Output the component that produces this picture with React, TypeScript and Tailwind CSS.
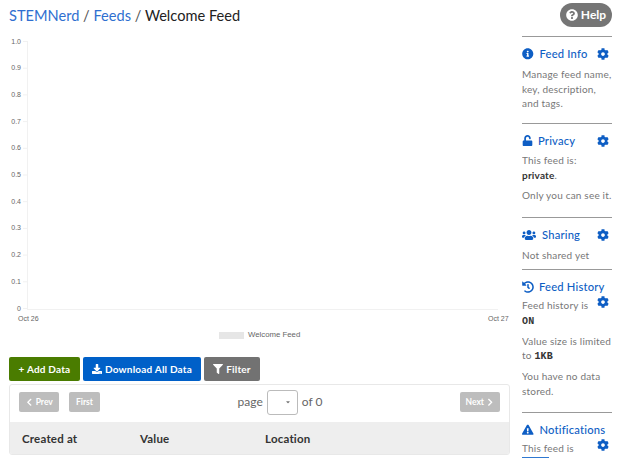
import { FaInfoCircle, FaUnlock, FaCog, FaUsers, FaHistory, FaExclamationTriangle, FaQuestionCircle, FaDownload, FaFilter, FaChevronLeft, FaChevronRight, FaCaretDown } from "react-icons/fa";
import type { ReactNode } from "react";

const ticks = ["1.0", "0.9", "0.8", "0.7", "0.6", "0.5", "0.4", "0.3", "0.2", "0.1", "0"];

function Chart() {
  const top = 41;
  const step = 26.7;
  return (
    <svg width="510" height="310" viewBox="0 30 510 310" className="block" style={{ fontFamily: "Liberation Sans, sans-serif" }}>
      <line x1="27.5" y1="41" x2="27.5" y2="309" stroke="#f1f1f1" />
      <line x1="27" y1="309.5" x2="498" y2="309.5" stroke="#f1f1f1" />
      {ticks.map((t, i) => (
        <g key={t}>
          <line x1="23" x2="27" y1={top + i * step + 0.5} y2={top + i * step + 0.5} stroke="#f1f1f1" />
          <text x="21" y={top + i * step + 2.5} textAnchor="end" fontSize="7" fill="#666">{t}</text>
        </g>
      ))}
      <text x="18" y="321" fontSize="7" fill="#666">Oct 26</text>
      <text x="488" y="321" fontSize="7" fill="#666">Oct 27</text>
      <rect x="219" y="332" width="25" height="7" fill="#e6e6e6" />
      <text x="248" y="337" fontSize="7.8" fill="#666">Welcome Feed</text>
    </svg>
  );
}

function Section({ icon, title, gear, gapClass = "gap-[6px]", children }: { icon: ReactNode; title: string; gear?: boolean; gapClass?: string; children: ReactNode }) {
  return (
    <section className="pt-[6px]">
      <div className="flex items-center justify-between h-[22px]">
        <div className={`flex items-center ${gapClass} text-[#0e5ec4] text-[11.2px] font-medium tracking-[0.2px]`}>
          {icon}
          <span className="whitespace-nowrap">{title}</span>
        </div>
        {gear && <FaCog className="text-[#0e5ec4] text-[12px] mr-[3px] shrink-0" />}
      </div>
      <div className="text-[10px] leading-[14.5px] text-[#777] tracking-[0.2px]">{children}</div>
    </section>
  );
}

function BodyGear() {
  return (
    <div className="relative">
      <FaCog className="absolute right-[3px] top-[-2px] text-[#0e5ec4] text-[12px]" />
    </div>
  );
}

function Pager({ children, className = "" }: { children: ReactNode; className?: string }) {
  return (
    <button className={`h-5 rounded-[2px] bg-[#bdbdbd] text-white text-[8.5px] font-bold flex items-center justify-center gap-[2px] ${className}`}>
      {children}
    </button>
  );
}

const mono = { fontFamily: "Liberation Mono, monospace" };

export default function App() {
  return (
    <div className="w-[624px] h-[459px] overflow-hidden bg-white flex text-[#222]" style={{ fontFamily: "Lato, sans-serif" }}>
      <main className="w-[510px] shrink-0">
        <h1 className="pl-[9px] pt-[6px] h-[30px] text-[14.6px] leading-[20px] text-[#222] whitespace-nowrap">
          <span className="text-[#2f6fd0]">STEMNerd</span> <span className="text-[#555]">/</span> <span className="text-[#2f6fd0]">Feeds</span> <span className="text-[#555]">/</span> Welcome Feed
        </h1>
        <Chart />
        <div className="flex gap-[3px] pl-[9px] mt-[17px]">
          <button className="h-6 w-[71px] rounded-[2px] bg-[#4a7c00] text-white text-[10px] font-bold tracking-[0.2px]">+ Add Data</button>
          <button className="h-6 w-[118px] rounded-[2px] bg-[#0060c8] text-white text-[10px] font-bold tracking-[0.2px] flex items-center justify-center gap-[3px]"><FaDownload className="text-[10px]" />Download All Data</button>
          <button className="h-6 w-[56px] rounded-[2px] bg-[#727272] text-white text-[10px] font-bold tracking-[0.2px] flex items-center justify-center gap-[3px]"><FaFilter className="text-[10px]" />Filter</button>
        </div>
        <div className="ml-[9px] mt-[3px] w-[501px] h-[71px] border border-[#e8e8e8] rounded-[3px] flex flex-col overflow-hidden">
          <div className="h-[37px] flex items-center justify-between px-[9px] pb-[3px]">
            <div className="flex gap-[10px]">
              <Pager className="w-10"><FaChevronLeft className="text-[8.5px]" />Prev</Pager>
              <Pager className="w-[31px]">First</Pager>
            </div>
            <div className="flex items-center gap-[4px] text-[12px] text-[#666]">
              <span>page</span>
              <div className="w-[31px] h-[25px] border border-[#bbb] rounded-[3px] flex items-center justify-end pr-[6px]"><FaCaretDown className="text-[6px] text-[#777]" /></div>
              <span>of 0</span>
            </div>
            <Pager className="w-10">Next<FaChevronRight className="text-[8.5px]" /></Pager>
          </div>
          <div className="flex-1 bg-[#eeeeee] flex items-center text-[11.5px] font-bold text-[#333] tracking-[0.2px] pt-[1px]">
            <span className="w-[130px] pl-[12px]">Created at</span>
            <span className="w-[125px]">Value</span>
            <span>Location</span>
          </div>
        </div>
      </main>
      <aside className="w-[90px] ml-[12px] shrink-0">
        <div className="h-[37px] border-b border-[#999] flex justify-end items-start pt-[3px]">
          <div className="h-6 w-[52px] rounded-full bg-[#757575] text-white text-[12px] font-bold flex items-center justify-center gap-[3px]">
            <FaQuestionCircle className="text-[12px]" />Help
          </div>
        </div>
        <div className="h-[87px] overflow-hidden border-b border-[#999]">
          <Section gear icon={<FaInfoCircle className="text-[11.5px]" />} title="Feed Info">
            <p className="pt-[2px]">Manage feed name, key, description, and tags.</p>
          </Section>
        </div>
        <div className="h-[94px] overflow-hidden border-b border-[#999]">
          <Section gear icon={<FaUnlock className="text-[11px]" />} gapClass="gap-[5px]" title="Privacy">
            <p className="pt-[1px]">This feed is:</p>
            <p><b className="text-[#333]">private</b>.</p>
            <p className="mt-[6px]">Only you can see it.</p>
          </Section>
        </div>
        <div className="h-[52px] overflow-hidden border-b border-[#999]">
          <Section gear icon={<FaUsers className="text-[14px]" />} title="Sharing">
            <p className="pt-[2px]">Not shared yet</p>
          </Section>
        </div>
        <div className="h-[143px] overflow-hidden border-b border-[#999]">
          <Section icon={<FaHistory className="text-[12px]" />} gapClass="gap-[5px]" title="Feed History">
            <BodyGear />
            <p>Feed history is</p>
            <p className="h-[15px]"><b className="text-[#333] leading-none" style={mono}>ON</b></p>
            <p className="mt-[6px]">Value size is limited</p>
            <p className="h-[15px]">to <b className="text-[#333] leading-none" style={mono}>1KB</b></p>
            <p className="mt-[6px]">You have no data stored.</p>
          </Section>
        </div>
        <Section icon={<FaExclamationTriangle className="text-[11.5px]" />} title="Notifications">
          <BodyGear />
          <p>This feed is</p>
          <div className="w-[27px] h-[1px] bg-[#2f78d0] mt-[1px]" />
        </Section>
      </aside>
    </div>
  );
}
